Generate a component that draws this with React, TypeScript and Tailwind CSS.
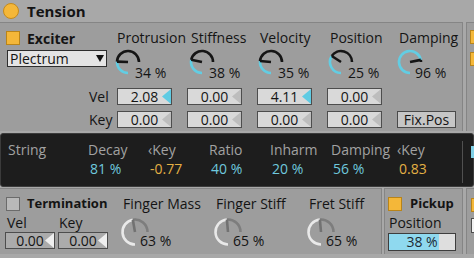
import React from 'react';

// Tension device (Ableton-style) — exciter / string / termination / pickup

type Col = {
  label: string;
  value: string;
  angle: number;
  vel: string;
  velOn: boolean;
  key: string;
  pad: string;
};

const EXCITER_COLS: Col[] = [
  { label: 'Protrusion', value: '34 %', angle: -88, vel: '2.08', velOn: true, key: '0.00', pad: 'pl-0' },
  { label: 'Stiffness', value: '38 %', angle: -78, vel: '0.00', velOn: false, key: '0.00', pad: 'pl-[4px]' },
  { label: 'Velocity', value: '35 %', angle: -85, vel: '4.11', velOn: true, key: '0.00', pad: 'pl-[3px]' },
  { label: 'Position', value: '25 %', angle: -57, vel: '0.00', velOn: false, key: '0.00', pad: 'pl-[3px]' },
];

const STRING_PARAMS = [
  { label: 'Decay', value: '81 %', tone: 'text-[#6fc9de]', w: 'w-[60px]' },
  { label: '‹Key', value: '-0.77', tone: 'text-[#e3b044]', w: 'w-[61px]' },
  { label: 'Ratio', value: '40 %', tone: 'text-[#6fc9de]', w: 'w-[61px]' },
  { label: 'Inharm', value: '20 %', tone: 'text-[#6fc9de]', w: 'w-[61px]' },
  { label: 'Damping', value: '56 %', tone: 'text-[#6fc9de]', w: 'w-[66px]' },
  { label: '‹Key', value: '0.83', tone: 'text-[#e3b044]', w: 'w-[65px]' },
];

const TERMINATION_KNOBS = [
  { label: 'Finger Mass', value: '63 %', angle: -10 },
  { label: 'Finger Stiff', value: '65 %', angle: -5 },
  { label: 'Fret Stiff', value: '65 %', angle: -5 },
];

// clock angle: 0 = 12 o'clock, clockwise positive. Knob runs from 6 o'clock (-180) to 3 o'clock (90).
function Knob({
  angle,
  size,
  r,
  on,
  off,
  needle,
}: {
  angle: number;
  size: number;
  r: number;
  on: string;
  off: string;
  needle: string;
}) {
  const c = size / 2;
  const pt = (a: number) => {
    const rad = (a * Math.PI) / 180;
    return [c + r * Math.sin(rad), c - r * Math.cos(rad)];
  };
  const arc = (a0: number, a1: number) => {
    const [x0, y0] = pt(a0);
    const [x1, y1] = pt(a1);
    const large = a1 - a0 > 180 ? 1 : 0;
    return `M${x0} ${y0} A${r} ${r} 0 ${large} 1 ${x1} ${y1}`;
  };
  const [nx, ny] = pt(angle);
  return (
    <svg width={size} height={size} viewBox={`0 0 ${size} ${size}`} className="shrink-0">
      <path d={arc(-180, angle)} fill="none" stroke={on} strokeWidth={2.6} />
      <path d={arc(angle, 90)} fill="none" stroke={off} strokeWidth={2.6} />
      <line x1={c} y1={c} x2={nx} y2={ny} stroke={needle} strokeWidth={2.6} />
    </svg>
  );
}

function ValueBox({
  value,
  tri,
  className,
}: {
  value: string;
  tri: string;
  className: string;
}) {
  return (
    <div className={`flex h-[17px] items-center border border-[#4d4d4d] ${className}`}>
      <span className="flex-1 pl-[9px] text-center text-[14px] leading-[15px]">{value}</span>
      <svg width="9" height="15" viewBox="0 0 9 15" className="shrink-0">
        <polygon points="9,0 0,7.5 9,15" fill={tri} />
      </svg>
    </div>
  );
}

function Square({ tone }: { tone: string }) {
  return <div className={`h-[14px] w-[14px] shrink-0 border border-[#b98419] ${tone}`} />;
}

export default function App() {
  return (
    <div className="h-[258px] w-[474px] overflow-hidden bg-[#a8a8a8] font-['Open_Sans','Liberation_Sans',sans-serif] text-[#141414]">
      {/* device title */}
      <div className="flex h-[22px] items-center gap-[8px] pl-[3px]">
        <div className="h-[16px] w-[16px] rounded-full border border-[#c48a1d] bg-[#f4b739]" />
        <span className="text-[15px] font-bold leading-[19px]">Tension</span>
      </div>

      {/* exciter */}
      <div className="flex h-[109px]">
        <div className="flex w-[463px] shrink-0 border-r border-t border-[#858585] bg-[#9d9d9d] pt-[5px]">
          <div className="flex w-[117px] shrink-0 flex-col pl-[6px]">
            <div className="flex h-[20px] items-center gap-[7px]">
              <Square tone="bg-[#f4b739]" />
              <span className="text-[14px] font-bold leading-[19px]">Exciter</span>
            </div>
            <div className="h-[40px] pt-[2px] pl-[1px]">
              <div className="flex h-[17px] w-[100px] items-center justify-between border border-[#2e2e2e] bg-[#e4e4e4] pl-[2px] pr-[2px]">
                <span className="text-[14px] leading-[15px]">Plectrum</span>
                <svg width="8" height="7" viewBox="0 0 8 7">
                  <polygon points="0,0 8,0 4,7" fill="#111" />
                </svg>
              </div>
            </div>
            <div className="h-[17px] pl-[83px] text-[14px] leading-[17px]">Vel</div>
            <div className="mt-[6px] h-[17px] pl-[83px] text-[14px] leading-[17px]">Key</div>
          </div>

          {EXCITER_COLS.map((col) => (
            <div key={col.label} className="flex w-[70px] shrink-0 flex-col">
              <div className={`h-[20px] text-[14px] leading-[20px] ${col.pad}`}>{col.label}</div>
              <div className={`flex h-[40px] items-start ${col.pad}`}>
                <div className="-ml-[3px]">
                  <Knob angle={col.angle} size={28} r={11} on="#62cde3" off="#151515" needle="#151515" />
                </div>
                <span className="-ml-[7px] mt-[15px] whitespace-nowrap text-[14px] leading-[19px]">
                  {col.value}
                </span>
              </div>
              <ValueBox
                value={col.vel}
                tri={col.velOn ? '#5fcbe3' : '#bdbdbd'}
                className="w-[55px] bg-[#d9d9d9]"
              />
              <ValueBox value={col.key} tri="#bdbdbd" className="mt-[6px] w-[55px] bg-[#d9d9d9]" />
            </div>
          ))}

          <div className="flex flex-1 flex-col">
            <div className="h-[20px] pl-[2px] text-[14px] leading-[20px]">Damping</div>
            <div className="flex h-[40px] items-start pl-[2px]">
              <div className="-ml-[3px]">
                <Knob angle={79} size={28} r={11} on="#62cde3" off="#151515" needle="#151515" />
              </div>
              <span className="-ml-[9px] mt-[15px] whitespace-nowrap text-[14px] leading-[19px]">96 %</span>
            </div>
            <div className="h-[17px]" />
            <div className="mt-[6px] flex h-[17px] w-[59px] items-center justify-center border border-[#4a4a4a] bg-[#c6c6c6] text-[14px] leading-[15px]">
              Fix.Pos
            </div>
          </div>
        </div>
        <div className="ml-[3px] flex flex-1 flex-col gap-[8px] border-l border-t border-[#858585] bg-[#9d9d9d] pl-[3px] pt-[7px]">
          <Square tone="bg-[#f4b739]" />
          <Square tone="bg-[#f4b739]" />
        </div>
      </div>

      {/* string */}
      <div className="mt-[2px] flex h-[54px] rounded-[3px] border border-[#3b3b3b] bg-[#1d1d1d] pl-[7px] pt-[7px]">
        <div className="w-[80px] shrink-0 text-[14px] leading-[18px] text-[#a2a2a2]">String</div>
        {STRING_PARAMS.map((p, i) => (
          <div key={i} className={`flex shrink-0 flex-col ${p.w}`}>
            <span className="text-[14px] leading-[18px] text-[#a2a2a2]">{p.label}</span>
            <span className={`pl-[2px] text-[14px] leading-[19px] ${p.tone}`}>{p.value}</span>
          </div>
        ))}
        <div className="h-[42px] w-px shrink-0 bg-[#505050]" />
        <div className="ml-[8px] mt-[5px] h-[12px] w-[10px] shrink-0 bg-[#7fd0e6]" />
      </div>

      {/* termination / pickup */}
      <div className="mt-[1px] flex h-[66px]">
        <div className="flex w-[382px] shrink-0 border-r border-t border-[#858585] bg-[#9d9d9d] pt-[5px]">
          <div className="flex w-[122px] shrink-0 flex-col pl-[5px]">
            <div className="flex h-[19px] items-center gap-[7px] pl-[1px]">
              <div className="h-[14px] w-[14px] shrink-0 border border-[#6b6b6b] bg-[#b9b9b9]" />
              <span className="text-[13px] font-bold leading-[19px]">Termination</span>
            </div>
            <div className="flex gap-[3px]">
              <div className="flex flex-col">
                <span className="h-[19px] pl-[2px] text-[14px] leading-[19px]">Vel</span>
                <ValueBox value="0.00" tri="#efefef" className="w-[50px] bg-[#ababab]" />
              </div>
              <div className="flex flex-col">
                <span className="h-[19px] pl-[1px] text-[14px] leading-[19px]">Key</span>
                <ValueBox value="0.00" tri="#efefef" className="w-[50px] bg-[#ababab]" />
              </div>
            </div>
          </div>
          {TERMINATION_KNOBS.map((k) => (
            <div key={k.label} className="flex w-[93px] shrink-0 flex-col">
              <div className="h-[19px] whitespace-nowrap pl-[1px] text-[14px] leading-[19px]">{k.label}</div>
              <div className="flex items-start">
                <div className="-ml-[2px] mt-[4px]">
                  <Knob angle={k.angle} size={30} r={12.5} on="#e9e9e9" off="#7d7d7d" needle="#727272" />
                </div>
                <span className="-ml-[10px] mt-[18px] whitespace-nowrap text-[14px] leading-[19px]">
                  {k.value}
                </span>
              </div>
            </div>
          ))}
        </div>

        <div className="ml-[2px] flex w-[79px] shrink-0 flex-col border-l border-r border-t border-[#858585] bg-[#9d9d9d] pl-[3px] pt-[5px]">
          <div className="flex h-[19px] items-center gap-[8px]">
            <Square tone="bg-[#f4b739]" />
            <span className="text-[13px] font-bold leading-[19px]">Pickup</span>
          </div>
          <div className="h-[19px] pl-[1px] text-[14px] leading-[19px]">Position</div>
          <div className="relative mt-[1px] flex h-[18px] w-[68px] border border-[#3d3d3d] bg-[#dedede]">
            <div className="h-full w-[50px] bg-[#8fd9ef]" />
            <span className="absolute inset-0 flex items-center justify-center text-[14px] leading-[16px] text-[#1d2a33]">
              38 %
            </span>
          </div>
        </div>

        <div className="ml-[3px] flex flex-1 flex-col gap-[6px] border-l border-t border-[#858585] bg-[#9d9d9d] pl-[4px] pt-[9px]">
          <Square tone="bg-[#f4b739]" />
          <div className="h-[15px] w-[14px] border border-[#4d4d4d] bg-[#f2f2f2]" />
        </div>
      </div>
    </div>
  );
}
